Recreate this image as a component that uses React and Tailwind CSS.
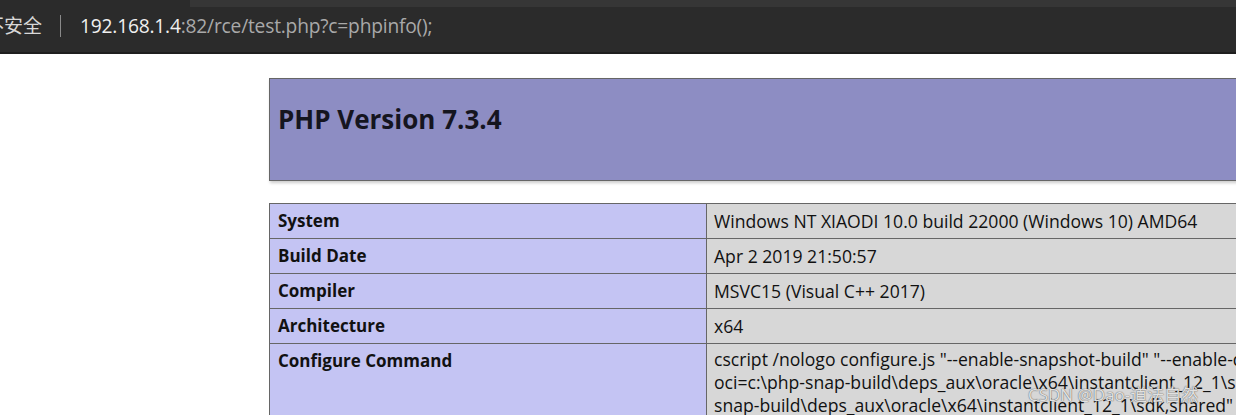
import React from "react";

const rows = [
  ["System", "Windows NT XIAODI 10.0 build 22000 (Windows 10) AMD64"],
  ["Build Date", "Apr 2 2019 21:50:57"],
  ["Compiler", "MSVC15 (Visual C++ 2017)"],
  ["Architecture", "x64"],
];

const configLines = [
  'cscript /nologo configure.js "--enable-snapshot-build" "--enable-debug-pack" "--with-pdo-',
  'oci=c:\\php-snap-build\\deps_aux\\oracle\\x64\\instantclient_12_1\\sdk,shared" "--with-oci8-12c=c:\\php-',
  'snap-build\\deps_aux\\oracle\\x64\\instantclient_12_1\\sdk,shared" "--enable-object-out-dir=../obj/"',
];

export default function App() {
  return (
    <div
      className="relative w-[1236px] h-[415px] overflow-hidden bg-white"
      style={{ fontFamily: '"Open Sans", "Noto Sans CJK SC", sans-serif' }}
    >
      {/* browser address bar */}
      <div className="relative h-[54px] bg-[#2b2b2b] border-b-2 border-[#1e1e1e] flex items-center">
        <div className="absolute top-0 left-[190px] right-0 h-[7px] bg-[#363636]" />
        <span className="ml-[-15px] text-[19px] text-[#d8d8d8] leading-none">不安全</span>
        <span className="ml-[18px] w-px h-[22px] bg-[#8a8a8a]" />
        <span className="ml-[19px] text-[19.2px] leading-none tracking-[-0.2px]">
          <span className="text-[#f0f0f0]">192.168.1.4</span>
          <span className="text-[#a9a9a9]">:82/rce/test.php?c=phpinfo();</span>
        </span>
      </div>

      {/* phpinfo content */}
      <div className="ml-[269px] mt-[24px] w-[1100px]">
        <div className="h-[103px] bg-[#8d8dc3] border border-[#666] shadow-[1px_2px_3px_#ccc] flex items-center pl-[8px] pb-[21px]">
          <h1 className="text-[26px] font-bold text-[#15151f]">PHP Version 7.3.4</h1>
        </div>

        <table className="mt-[22px] w-full table-fixed border-collapse text-[17px] text-[#111]">
          <colgroup>
            <col className="w-[437px]" />
            <col />
          </colgroup>
          <tbody>
            {rows.map(([k, v]) => (
              <tr key={k} className="h-[35px]">
                <td className="bg-[#c4c4f3] border border-[#666] px-[8px] font-bold align-middle">
                  {k}
                </td>
                <td className="bg-[#d7d7d7] border border-[#666] px-[7px] text-[17.6px] align-middle whitespace-nowrap">
                  {v}
                </td>
              </tr>
            ))}
            <tr>
              <td className="bg-[#c4c4f3] border border-[#666] px-[8px] pt-[4px] font-bold align-top">
                Configure Command
              </td>
              <td className="bg-[#d7d7d7] border border-[#666] px-[7px] pt-[4px] text-[17.6px] align-top whitespace-nowrap leading-[23px] overflow-hidden">
                {configLines.map((l) => (
                  <div key={l}>{l}</div>
                ))}
              </td>
            </tr>
          </tbody>
        </table>
      </div>

      {/* watermark */}
      <div className="absolute left-[1028px] top-[386px] text-[17px] text-white/80 leading-none [text-shadow:0_0_1px_#666,0_0_1px_#666]">
        CSDN @Dao-道法自然
      </div>
    </div>
  );
}
